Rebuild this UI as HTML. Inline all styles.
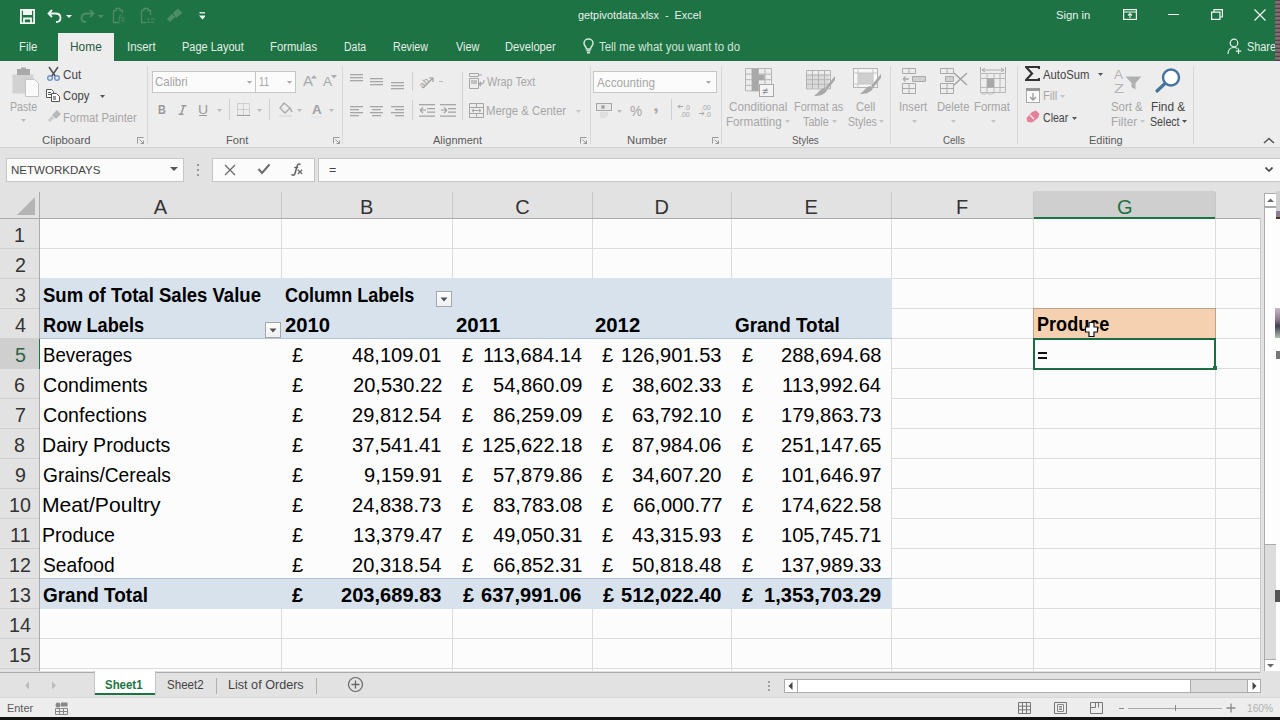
<!DOCTYPE html><html><head><meta charset="utf-8"><style>
html,body{margin:0;padding:0;width:1280px;height:720px;overflow:hidden;background:#fff;font-family:"Liberation Sans",sans-serif}
.t{position:absolute;white-space:pre;line-height:normal;transform-origin:0 0}
</style></head><body>
<div style="position:absolute;left:0px;top:0px;width:1280px;height:61px;background:#1e7344"></div>
<div style="position:absolute;left:58px;top:33px;width:56px;height:28px;background:#ededed"></div>
<div style="position:absolute;left:0px;top:61px;width:1280px;height:86px;background:#ededed"></div>
<div style="position:absolute;left:0px;top:147px;width:1280px;height:1px;background:#d0d0d0"></div>
<div style="position:absolute;left:0px;top:148px;width:1280px;height:44px;background:#e2e2e2"></div>
<div class="t" style="left:577.57px;top:8.59px;font-size:11.5px;font-weight:400;color:#e9f1ec;transform:scaleX(0.9447);">getpivotdata.xlsx  -  Excel</div>
<div class="t" style="left:1055.50px;top:8.59px;font-size:11.5px;font-weight:400;color:#e9f1ec;transform:scaleX(0.9744);">Sign in</div>
<div class="t" style="left:19.08px;top:40.14px;font-size:12px;font-weight:400;color:#e3eee7;transform:scaleX(0.9540);">File</div>
<div class="t" style="left:126.97px;top:40.14px;font-size:12px;font-weight:400;color:#e3eee7;transform:scaleX(0.9529);">Insert</div>
<div class="t" style="left:182.12px;top:40.14px;font-size:12px;font-weight:400;color:#e3eee7;transform:scaleX(0.9155);">Page Layout</div>
<div class="t" style="left:270.10px;top:40.14px;font-size:12px;font-weight:400;color:#e3eee7;transform:scaleX(0.9402);">Formulas</div>
<div class="t" style="left:343.91px;top:40.14px;font-size:12px;font-weight:400;color:#e3eee7;transform:scaleX(0.8723);">Data</div>
<div class="t" style="left:393.15px;top:40.14px;font-size:12px;font-weight:400;color:#e3eee7;transform:scaleX(0.8854);">Review</div>
<div class="t" style="left:455.55px;top:40.14px;font-size:12px;font-weight:400;color:#e3eee7;transform:scaleX(0.9091);">View</div>
<div class="t" style="left:505.11px;top:40.14px;font-size:12px;font-weight:400;color:#e3eee7;transform:scaleX(0.9268);">Developer</div>
<div class="t" style="left:1246.51px;top:40.14px;font-size:12px;font-weight:400;color:#e3eee7;transform:scaleX(0.9061);">Share</div>
<div class="t" style="left:599.27px;top:40.14px;font-size:12px;font-weight:400;color:#d3e6da;transform:scaleX(0.9521);">Tell me what you want to do</div>
<div class="t" style="left:69.80px;top:40.14px;font-size:12px;font-weight:400;color:#285a3f;transform:scaleX(0.9925);">Home</div>
<div style="position:absolute;left:147px;top:66px;width:1px;height:78px;background:#d8d8d8"></div>
<div style="position:absolute;left:342px;top:66px;width:1px;height:78px;background:#d8d8d8"></div>
<div style="position:absolute;left:590px;top:66px;width:1px;height:78px;background:#d8d8d8"></div>
<div style="position:absolute;left:721px;top:66px;width:1px;height:78px;background:#d8d8d8"></div>
<div style="position:absolute;left:890px;top:66px;width:1px;height:78px;background:#d8d8d8"></div>
<div style="position:absolute;left:1017px;top:66px;width:1px;height:78px;background:#d8d8d8"></div>
<div style="position:absolute;left:1193px;top:66px;width:1px;height:78px;background:#d8d8d8"></div>
<svg style="position:absolute;left:137px;top:137px;" width="7" height="7" viewBox="0 0 7 7"><path d="M0.5 6.5V0.5H6.5" fill="none" stroke="#999"/><path d="M2.5 2.5L6.5 6.5M6.5 3.5V6.5H3.5" fill="none" stroke="#999"/></svg>
<svg style="position:absolute;left:333px;top:137px;" width="7" height="7" viewBox="0 0 7 7"><path d="M0.5 6.5V0.5H6.5" fill="none" stroke="#999"/><path d="M2.5 2.5L6.5 6.5M6.5 3.5V6.5H3.5" fill="none" stroke="#999"/></svg>
<svg style="position:absolute;left:580px;top:137px;" width="7" height="7" viewBox="0 0 7 7"><path d="M0.5 6.5V0.5H6.5" fill="none" stroke="#999"/><path d="M2.5 2.5L6.5 6.5M6.5 3.5V6.5H3.5" fill="none" stroke="#999"/></svg>
<svg style="position:absolute;left:712px;top:137px;" width="7" height="7" viewBox="0 0 7 7"><path d="M0.5 6.5V0.5H6.5" fill="none" stroke="#999"/><path d="M2.5 2.5L6.5 6.5M6.5 3.5V6.5H3.5" fill="none" stroke="#999"/></svg>
<svg style="position:absolute;left:11px;top:67px;" width="29" height="31" viewBox="0 0 29 31"><rect x="1.5" y="7.5" width="21" height="19" fill="#d2d2d2"/><rect x="6" y="2" width="13" height="6" fill="#a9a9a9"/><rect x="10" y="0.5" width="5" height="3" fill="#a9a9a9"/><path d="M14.5 12.5H23.5L27.5 16.5V29.5H14.5Z" fill="#fafafa" stroke="#c4c4c4"/></svg>
<svg style="position:absolute;left:21px;top:119px;" width="5" height="3" viewBox="0 0 5 3"><path d="M0 0H5L2.5 3Z" fill="#bbb"/></svg>
<div class="t" style="left:10.15px;top:99.74px;font-size:12px;font-weight:400;color:#a6a6a6;transform:scaleX(0.8882);">Paste</div>
<svg style="position:absolute;left:46px;top:66px;" width="15" height="15" viewBox="0 0 15 15"><path d="M3 1L9.5 10.5M12 1L5.5 10.5" stroke="#555" stroke-width="1.6" fill="none"/><circle cx="4" cy="12" r="2.3" fill="none" stroke="#6f95c8" stroke-width="1.4"/><circle cx="11" cy="12" r="2.3" fill="none" stroke="#6f95c8" stroke-width="1.4"/></svg>
<div class="t" style="left:63.42px;top:68.14px;font-size:12px;font-weight:400;color:#444444;transform:scaleX(0.9722);">Cut</div>
<svg style="position:absolute;left:45px;top:88px;" width="16" height="15" viewBox="0 0 16 15"><path d="M1.5 1.5H6.5L8.5 3.5V9.5H1.5Z" fill="#fff" stroke="#555"/><path d="M3 4.5H6M3 6.5H6" stroke="#555"/><path d="M6.5 5.5H11.5L14.5 8.5V13.5H6.5Z" fill="#fff" stroke="#555"/><rect x="8" y="8" width="3" height="4" fill="#999"/></svg>
<div class="t" style="left:63.44px;top:88.89px;font-size:12px;font-weight:400;color:#444444;transform:scaleX(0.9391);">Copy</div>
<svg style="position:absolute;left:100px;top:95px;" width="5" height="3" viewBox="0 0 5 3"><path d="M0 0H5L2.5 3Z" fill="#555"/></svg>
<svg style="position:absolute;left:47px;top:109px;" width="15" height="13" viewBox="0 0 15 13"><path d="M1 11L5 7L7 9L3 13Z" fill="#c8c8c8"/><path d="M5 6L10 1L14 5L9 10Z" fill="#b8b8b8"/></svg>
<div class="t" style="left:63.36px;top:111.04px;font-size:12px;font-weight:400;color:#a6a6a6;transform:scaleX(0.9293);">Format Painter</div>
<div class="t" style="left:41.93px;top:133.90px;font-size:10.5px;font-weight:400;color:#5a5a5a;transform:scaleX(1.0804);">Clipboard</div>
<div style="position:absolute;left:152px;top:71px;width:104px;height:22px;background:#fbfbfb;border:1px solid #c6c6c6;box-sizing:border-box"></div>
<div style="position:absolute;left:255px;top:71px;width:41px;height:22px;background:#fbfbfb;border:1px solid #c6c6c6;box-sizing:border-box"></div>
<div class="t" style="left:154.72px;top:74.94px;font-size:12px;font-weight:400;color:#a6a6a6;transform:scaleX(0.9607);">Calibri</div>
<div class="t" style="left:259.27px;top:74.94px;font-size:12px;font-weight:400;color:#a6a6a6;transform:scaleX(0.8106);">11</div>
<svg style="position:absolute;left:247px;top:81px;" width="5" height="3" viewBox="0 0 5 3"><path d="M0 0H5L2.5 3Z" fill="#aaa"/></svg>
<svg style="position:absolute;left:287px;top:81px;" width="5" height="3" viewBox="0 0 5 3"><path d="M0 0H5L2.5 3Z" fill="#aaa"/></svg>
<div class="t" style="left:303.00px;top:73.33px;font-size:14px;font-weight:400;color:#a8a8a8;transform:scaleX(1.0741);">A</div>
<svg style="position:absolute;left:311px;top:75px;" width="6" height="4" viewBox="0 0 6 4"><path d="M0 3.5H6L3 0Z" fill="#aaa"/></svg>
<div class="t" style="left:323.00px;top:75.14px;font-size:12px;font-weight:400;color:#a8a8a8;transform:scaleX(1.1278);">A</div>
<svg style="position:absolute;left:331px;top:75px;" width="6" height="4" viewBox="0 0 6 4"><path d="M0 0H6L3 3.5Z" fill="#aaa"/></svg>
<div class="t" style="left:157.50px;top:103.14px;font-size:12px;font-weight:700;color:#9a9a9a;transform:scaleX(0.9016);">B</div>
<svg style="position:absolute;left:178px;top:105px;" width="9" height="10" viewBox="0 0 9 10"><path d="M3.5 0.8H8.5M0.5 9.2H5.5M6 0.8L3 9.2" fill="none" stroke="#9a9a9a" stroke-width="1.5"/></svg>
<div class="t" style="left:197.95px;top:102.64px;font-size:12px;font-weight:400;color:#9a9a9a;transform:scaleX(1.1696);">U</div>
<div style="position:absolute;left:199px;top:115px;width:8px;height:1px;background:#9a9a9a"></div>
<svg style="position:absolute;left:217px;top:109px;" width="5" height="3" viewBox="0 0 5 3"><path d="M0 0H5L2.5 3Z" fill="#bbb"/></svg>
<div style="position:absolute;left:229px;top:99px;width:1px;height:21px;background:#d0d0d0"></div>
<svg style="position:absolute;left:237px;top:103px;" width="13" height="13" viewBox="0 0 13 13"><path d="M0.5 0.5H12.5V12.5H0.5ZM6.5 0.5V12.5M0.5 6.5H12.5" fill="none" stroke="#b0b0b0" stroke-dasharray="1 1"/><path d="M0 12.5H13" stroke="#a0a0a0" stroke-width="1.2"/></svg>
<svg style="position:absolute;left:257px;top:109px;" width="5" height="3" viewBox="0 0 5 3"><path d="M0 0H5L2.5 3Z" fill="#bbb"/></svg>
<div style="position:absolute;left:269px;top:99px;width:1px;height:21px;background:#d0d0d0"></div>
<svg style="position:absolute;left:278px;top:102px;" width="15" height="15" viewBox="0 0 15 15"><path d="M6 1L12 6L7 11L2 6Z" fill="none" stroke="#a8a8a8" stroke-width="1.3"/><path d="M12 6L14 10" stroke="#a8a8a8" stroke-width="1.5"/><rect x="1" y="13" width="13" height="2" fill="#e0e0e0"/></svg>
<svg style="position:absolute;left:297px;top:109px;" width="5" height="3" viewBox="0 0 5 3"><path d="M0 0H5L2.5 3Z" fill="#bbb"/></svg>
<div class="t" style="left:311.66px;top:102.23px;font-size:13px;font-weight:700;color:#a0a0a0;transform:scaleX(1.0333);">A</div>
<div style="position:absolute;left:311px;top:116px;width:11px;height:2px;background:#e6e6e6"></div>
<svg style="position:absolute;left:329px;top:109px;" width="5" height="3" viewBox="0 0 5 3"><path d="M0 0H5L2.5 3Z" fill="#bbb"/></svg>
<div class="t" style="left:225.81px;top:133.90px;font-size:10.5px;font-weight:400;color:#5a5a5a;transform:scaleX(1.0593);">Font</div>
<svg style="position:absolute;left:350px;top:74px;" width="14" height="9" viewBox="0 0 14 9"><rect x="0" y="0" width="13" height="1.3" fill="#a6a6a6"/><rect x="0" y="3" width="13" height="1.3" fill="#a6a6a6"/><rect x="0" y="6" width="13" height="1.3" fill="#a6a6a6"/></svg>
<svg style="position:absolute;left:370px;top:78px;" width="14" height="9" viewBox="0 0 14 9"><rect x="0" y="0" width="13" height="1.3" fill="#a6a6a6"/><rect x="0" y="3" width="13" height="1.3" fill="#a6a6a6"/><rect x="0" y="6" width="13" height="1.3" fill="#a6a6a6"/></svg>
<svg style="position:absolute;left:391px;top:82px;" width="14" height="9" viewBox="0 0 14 9"><rect x="0" y="0" width="13" height="1.3" fill="#a6a6a6"/><rect x="0" y="3" width="13" height="1.3" fill="#a6a6a6"/><rect x="0" y="6" width="13" height="1.3" fill="#a6a6a6"/></svg>
<svg style="position:absolute;left:350px;top:106px;" width="14" height="12" viewBox="0 0 14 12"><rect x="0" y="0" width="13" height="1.3" fill="#a6a6a6"/><rect x="0" y="3" width="9" height="1.3" fill="#a6a6a6"/><rect x="0" y="6" width="13" height="1.3" fill="#a6a6a6"/><rect x="0" y="9" width="9" height="1.3" fill="#a6a6a6"/></svg>
<svg style="position:absolute;left:370px;top:106px;" width="14" height="12" viewBox="0 0 14 12"><rect x="0" y="0" width="13" height="1.3" fill="#a6a6a6"/><rect x="2" y="3" width="9" height="1.3" fill="#a6a6a6"/><rect x="0" y="6" width="13" height="1.3" fill="#a6a6a6"/><rect x="2" y="9" width="9" height="1.3" fill="#a6a6a6"/></svg>
<svg style="position:absolute;left:391px;top:106px;" width="14" height="12" viewBox="0 0 14 12"><rect x="0" y="0" width="13" height="1.3" fill="#a6a6a6"/><rect x="4" y="3" width="9" height="1.3" fill="#a6a6a6"/><rect x="0" y="6" width="13" height="1.3" fill="#a6a6a6"/><rect x="4" y="9" width="9" height="1.3" fill="#a6a6a6"/></svg>
<div style="position:absolute;left:412px;top:72px;width:1px;height:19px;background:#d0d0d0"></div>
<div style="position:absolute;left:412px;top:100px;width:1px;height:20px;background:#d0d0d0"></div>
<svg style="position:absolute;left:419px;top:74px;" width="16" height="15" viewBox="0 0 16 15"><text x="0" y="12" font-size="9" fill="#a0a0a0" transform="rotate(-45 5 9)" font-family="Liberation Sans">ab</text><path d="M4 14L14 4M10 4H14V8" fill="none" stroke="#a0a0a0" stroke-width="1.2"/></svg>
<div style="position:absolute;left:439px;top:81px;width:4px;height:1px;background:#bbb"></div>
<svg style="position:absolute;left:419px;top:104px;" width="16" height="13" viewBox="0 0 16 13"><rect x="0" y="0" width="16" height="1.3" fill="#a6a6a6"/><rect x="0" y="11.5" width="16" height="1.3" fill="#a6a6a6"/><rect x="8" y="4" width="8" height="1.3" fill="#a6a6a6"/><rect x="8" y="7.5" width="8" height="1.3" fill="#a6a6a6"/><path d="M1 6.2L4 3.5M1 6.2L4 9M1 6.2H7" stroke="#a6a6a6" stroke-width="1.3" fill="none"/></svg>
<svg style="position:absolute;left:440px;top:104px;" width="16" height="13" viewBox="0 0 16 13"><rect x="0" y="0" width="16" height="1.3" fill="#a6a6a6"/><rect x="0" y="11.5" width="16" height="1.3" fill="#a6a6a6"/><rect x="8" y="4" width="8" height="1.3" fill="#a6a6a6"/><rect x="8" y="7.5" width="8" height="1.3" fill="#a6a6a6"/><path d="M7 6.2L4 3.5M7 6.2L4 9M7 6.2H1" stroke="#a6a6a6" stroke-width="1.3" fill="none"/></svg>
<div style="position:absolute;left:462px;top:72px;width:1px;height:48px;background:#d0d0d0"></div>
<svg style="position:absolute;left:469px;top:73px;" width="16" height="16" viewBox="0 0 16 16"><path d="M0.5 0.5H9.5V3.5H0.5ZM0.5 5.5H9.5V15.5H0.5Z" fill="none" stroke="#a6a6a6"/><path d="M9.5 2H13" stroke="#a6a6a6"/><rect x="2" y="7" width="6" height="4" fill="#c0c0c0"/><path d="M15 7C15 11 13 11 10 11M12 9L10 11L12 13" fill="none" stroke="#a6a6a6" stroke-width="1.2"/></svg>
<div class="t" style="left:486.95px;top:75.14px;font-size:12px;font-weight:400;color:#a6a6a6;transform:scaleX(0.8989);">Wrap Text</div>
<svg style="position:absolute;left:469px;top:103px;" width="15" height="15" viewBox="0 0 15 15"><path d="M0.5 0.5H14.5V14.5H0.5ZM0.5 4.5H14.5M0.5 10.5H14.5M7.5 0.5V4.5M7.5 10.5V14.5" fill="none" stroke="#a6a6a6"/><path d="M3 7.5H12M3 7.5L5 5.8M3 7.5L5 9.2M12 7.5L10 5.8M12 7.5L10 9.2" fill="none" stroke="#a6a6a6"/></svg>
<div class="t" style="left:486.09px;top:104.14px;font-size:12px;font-weight:400;color:#a6a6a6;transform:scaleX(0.9459);">Merge &amp; Center</div>
<svg style="position:absolute;left:576px;top:110px;" width="5" height="3" viewBox="0 0 5 3"><path d="M0 0H5L2.5 3Z" fill="#c4c4c4"/></svg>
<div class="t" style="left:433.00px;top:133.90px;font-size:10.5px;font-weight:400;color:#5a5a5a;transform:scaleX(1.0511);">Alignment</div>
<div style="position:absolute;left:593px;top:71px;width:124px;height:22px;background:#fbfbfb;border:1px solid #c6c6c6;box-sizing:border-box"></div>
<div class="t" style="left:596.80px;top:75.54px;font-size:12px;font-weight:400;color:#a6a6a6;transform:scaleX(0.9768);">Accounting</div>
<svg style="position:absolute;left:706px;top:81px;" width="5" height="3" viewBox="0 0 5 3"><path d="M0 0H5L2.5 3Z" fill="#aaa"/></svg>
<svg style="position:absolute;left:596px;top:103px;" width="16" height="15" viewBox="0 0 16 15"><rect x="0.5" y="0.5" width="15" height="7" fill="#e8e8e8" stroke="#a6a6a6"/><circle cx="7" cy="4" r="2" fill="#a6a6a6"/><path d="M4 10H12M4 12H12M4 14H10" stroke="#d0d0d0"/></svg>
<svg style="position:absolute;left:617px;top:110px;" width="5" height="3" viewBox="0 0 5 3"><path d="M0 0H5L2.5 3Z" fill="#bbb"/></svg>
<div class="t" style="left:630.12px;top:103.13px;font-size:14px;font-weight:400;color:#a6a6a6;transform:scaleX(0.9756);">%</div>
<div class="t" style="left:652.50px;top:96.52px;font-size:16px;font-weight:700;color:#a6a6a6;transform:scaleX(1.3393);">,</div>
<div style="position:absolute;left:671px;top:99px;width:1px;height:21px;background:#d0d0d0"></div>
<svg style="position:absolute;left:677px;top:103px;" width="15" height="14" viewBox="0 0 15 14"><path d="M1 3.5H6M1 3.5L3 1.5M1 3.5L3 5.5" fill="none" stroke="#a6a6a6"/><text x="7" y="6.5" font-size="7" fill="#a6a6a6" font-family="Liberation Sans">.0</text><text x="3" y="13.5" font-size="7" fill="#a6a6a6" font-family="Liberation Sans">.00</text></svg>
<svg style="position:absolute;left:698px;top:103px;" width="15" height="14" viewBox="0 0 15 14"><text x="3" y="6.5" font-size="7" fill="#a6a6a6" font-family="Liberation Sans">.00</text><path d="M1 10.5H6M6 10.5L4 8.5M6 10.5L4 12.5" fill="none" stroke="#a6a6a6"/><text x="7" y="13.5" font-size="7" fill="#a6a6a6" font-family="Liberation Sans">.0</text></svg>
<div class="t" style="left:627.10px;top:133.90px;font-size:10.5px;font-weight:400;color:#5a5a5a;transform:scaleX(1.0735);">Number</div>
<svg style="position:absolute;left:745px;top:68px;" width="30" height="30" viewBox="0 0 30 30"><g fill="none" stroke="#b4b4b4"><path d="M0.5 0.5H26.5M0.5 0.5V23"/><path d="M0.5 6.1H26.5M7.0 0.5V23"/><path d="M0.5 11.7H26.5M13.5 0.5V23"/><path d="M0.5 17.3H26.5M20.0 0.5V23"/><path d="M0.5 22.9H26.5M26.5 0.5V23"/></g><rect x="7" y="1" width="6" height="22" fill="#a8a8a8"/><rect x="13" y="6.6" width="6.5" height="5.6" fill="#a8a8a8"/><rect x="14.5" y="16.5" width="14" height="12" fill="#f4f4f4" stroke="#a8a8a8"/><text x="17" y="26.5" font-size="11" fill="#888" font-family="Liberation Sans">≠</text></svg>
<svg style="position:absolute;left:806px;top:70px;" width="30" height="27" viewBox="0 0 30 27"><rect x="1" y="4" width="22" height="14" fill="#dadada"/><g fill="none" stroke="#b4b4b4"><path d="M0.5 0.5H24.5M0.5 0.5V19"/><path d="M0.5 5.1H24.5M6.5 0.5V19"/><path d="M0.5 9.7H24.5M12.5 0.5V19"/><path d="M0.5 14.3H24.5M18.5 0.5V19"/><path d="M0.5 18.9H24.5M24.5 0.5V19"/></g><path d="M29 6L19 18L21 20L29 10Z" fill="#a8a8a8"/><path d="M18 18C14 19 12 23 8 26C13 26 19 25 21 20Z" fill="#a8a8a8"/></svg>
<div class="t" style="left:729.42px;top:99.94px;font-size:12px;font-weight:400;color:#a6a6a6;transform:scaleX(0.9724);">Conditional</div>
<div class="t" style="left:726.07px;top:114.54px;font-size:12px;font-weight:400;color:#a6a6a6;transform:scaleX(0.9709);">Formatting</div>
<svg style="position:absolute;left:785px;top:120px;" width="5" height="3" viewBox="0 0 5 3"><path d="M0 0H5L2.5 3Z" fill="#c4c4c4"/></svg>
<div class="t" style="left:794.12px;top:99.94px;font-size:12px;font-weight:400;color:#a6a6a6;transform:scaleX(0.9122);">Format as</div>
<div class="t" style="left:802.78px;top:114.54px;font-size:12px;font-weight:400;color:#a6a6a6;transform:scaleX(0.8961);">Table</div>
<svg style="position:absolute;left:832px;top:120px;" width="5" height="3" viewBox="0 0 5 3"><path d="M0 0H5L2.5 3Z" fill="#c4c4c4"/></svg>
<svg style="position:absolute;left:853px;top:68px;" width="30" height="28" viewBox="0 0 30 28"><rect x="0.5" y="0.5" width="24" height="19" fill="#f6f6f6" stroke="#b4b4b4"/><rect x="5" y="5" width="15" height="11" fill="#cfcfcf"/><path d="M5 0.5V19.5M20 0.5V19.5M0.5 5H24.5M0.5 16H24.5" stroke="#c4c4c4" fill="none"/><path d="M28 6L18 18L20 20L28 10Z" fill="#a8a8a8"/><path d="M17 18C13 19 11 23 7 26C12 26 18 25 20 20Z" fill="#a8a8a8"/></svg>
<div class="t" style="left:856.44px;top:99.94px;font-size:12px;font-weight:400;color:#a6a6a6;transform:scaleX(0.9346);">Cell</div>
<div class="t" style="left:847.52px;top:114.54px;font-size:12px;font-weight:400;color:#a6a6a6;transform:scaleX(0.8822);">Styles</div>
<svg style="position:absolute;left:879px;top:120px;" width="5" height="3" viewBox="0 0 5 3"><path d="M0 0H5L2.5 3Z" fill="#c4c4c4"/></svg>
<div class="t" style="left:791.56px;top:133.90px;font-size:10.5px;font-weight:400;color:#5a5a5a;transform:scaleX(0.9362);">Styles</div>
<svg style="position:absolute;left:902px;top:68px;" width="25" height="27" viewBox="0 0 25 27"><g fill="none" stroke="#aaa"><path d="M0.5 0.5H13.5V5.5H0.5ZM7 0.5V5.5"/><path d="M10.5 8.5H23.5V13.5H10.5ZM17 8.5V13.5"/><path d="M0.5 15.5H13.5V25.5H0.5ZM7 15.5V25.5M0.5 20.5H13.5"/></g><rect x="11" y="9" width="12" height="4" fill="#d0d0d0"/><path d="M1 11H7M1 11L3.5 8.5M1 11L3.5 13.5" stroke="#aaa" stroke-width="1.3" fill="none"/></svg>
<svg style="position:absolute;left:940px;top:68px;" width="28" height="27" viewBox="0 0 28 27"><g fill="none" stroke="#aaa"><path d="M0.5 0.5H13.5V5.5H0.5ZM7 0.5V5.5"/><path d="M5.5 8.5H13.5V13.5H5.5Z"/><path d="M0.5 15.5H13.5V25.5H0.5ZM7 15.5V25.5M0.5 20.5H13.5"/></g><rect x="6" y="9" width="7" height="4" fill="#d0d0d0"/><path d="M14 5L27 17M27 5L14 17" stroke="#a0a0a0" stroke-width="1.4"/></svg>
<svg style="position:absolute;left:980px;top:67px;" width="27" height="30" viewBox="0 0 27 30"><path d="M0.5 0V6M25.5 0V6M2 3H24M2 3L5 1M2 3L5 5M24 3L21 1M24 3L21 5" fill="none" stroke="#aaa"/><g fill="none" stroke="#b8b8b8"><path d="M0.5 6.5H25.5V25.5H0.5ZM7 6.5V25.5M14 6.5V25.5M20 6.5V25.5M0.5 11.5H25.5M0.5 20.5H25.5"/></g><rect x="7" y="11.5" width="7" height="9" fill="#a8a8a8"/><path d="M1 26Q4 29 7 26Q10 29 14 26" fill="none" stroke="#c0c0c0"/></svg>
<div class="t" style="left:898.99px;top:99.94px;font-size:12px;font-weight:400;color:#a6a6a6;transform:scaleX(0.9356);">Insert</div>
<div class="t" style="left:937.10px;top:99.94px;font-size:12px;font-weight:400;color:#a6a6a6;transform:scaleX(0.9343);">Delete</div>
<div class="t" style="left:974.09px;top:99.94px;font-size:12px;font-weight:400;color:#a6a6a6;transform:scaleX(0.9470);">Format</div>
<svg style="position:absolute;left:912px;top:120px;" width="5" height="3" viewBox="0 0 5 3"><path d="M0 0H5L2.5 3Z" fill="#c4c4c4"/></svg>
<svg style="position:absolute;left:951px;top:120px;" width="5" height="3" viewBox="0 0 5 3"><path d="M0 0H5L2.5 3Z" fill="#c4c4c4"/></svg>
<svg style="position:absolute;left:991px;top:120px;" width="5" height="3" viewBox="0 0 5 3"><path d="M0 0H5L2.5 3Z" fill="#c4c4c4"/></svg>
<div class="t" style="left:942.51px;top:133.90px;font-size:10.5px;font-weight:400;color:#5a5a5a;transform:scaleX(0.9346);">Cells</div>
<svg style="position:absolute;left:1025px;top:66px;" width="15" height="15" viewBox="0 0 15 15"><path d="M14 3V1H1L7 7.5L1 14H14V12" fill="none" stroke="#333" stroke-width="2.2" stroke-linejoin="miter"/></svg>
<div class="t" style="left:1043.30px;top:67.84px;font-size:12px;font-weight:400;color:#444444;transform:scaleX(0.9403);">AutoSum</div>
<svg style="position:absolute;left:1098px;top:73px;" width="5" height="3" viewBox="0 0 5 3"><path d="M0 0H5L2.5 3Z" fill="#555"/></svg>
<svg style="position:absolute;left:1026px;top:88px;" width="14" height="15" viewBox="0 0 14 15"><rect x="0.5" y="0.5" width="13" height="14" fill="#fafafa" stroke="#aaa"/><rect x="0" y="0" width="14" height="3" fill="#999"/><path d="M7 5V12M4 9L7 12L10 9" fill="none" stroke="#999" stroke-width="1.3"/></svg>
<div class="t" style="left:1042.62px;top:88.64px;font-size:12px;font-weight:400;color:#a6a6a6;transform:scaleX(0.9218);">Fill</div>
<svg style="position:absolute;left:1060px;top:95px;" width="5" height="3" viewBox="0 0 5 3"><path d="M0 0H5L2.5 3Z" fill="#c4c4c4"/></svg>
<svg style="position:absolute;left:1026px;top:110px;" width="14" height="13" viewBox="0 0 14 13"><path d="M6 2L10 0.5L13.5 4L12 8L6 12.5L1.5 12L0.5 8Z" fill="#e3809a"/><path d="M4 5L8 9" stroke="#f0f0f0" stroke-width="1.2"/></svg>
<div class="t" style="left:1042.97px;top:110.74px;font-size:12px;font-weight:400;color:#444444;transform:scaleX(0.8800);">Clear</div>
<svg style="position:absolute;left:1072px;top:117px;" width="5" height="3" viewBox="0 0 5 3"><path d="M0 0H5L2.5 3Z" fill="#555"/></svg>
<div class="t" style="left:1114.00px;top:68.14px;font-size:12px;font-weight:400;color:#b4b4b4;transform:scaleX(1.1278);">A</div>
<div class="t" style="left:1113.51px;top:82.14px;font-size:12px;font-weight:400;color:#b4b4b4;transform:scaleX(1.3636);">Z</div>
<svg style="position:absolute;left:1125px;top:76px;" width="17" height="14" viewBox="0 0 17 14"><path d="M0.5 0.5H16.5L10.5 7V13.5L6.5 11V7Z" fill="#b0b0b0"/></svg>
<div class="t" style="left:1111.49px;top:99.94px;font-size:12px;font-weight:400;color:#a6a6a6;transform:scaleX(0.9515);">Sort &amp;</div>
<div class="t" style="left:1111.06px;top:114.54px;font-size:12px;font-weight:400;color:#a6a6a6;transform:scaleX(0.9804);">Filter</div>
<svg style="position:absolute;left:1140px;top:120px;" width="5" height="3" viewBox="0 0 5 3"><path d="M0 0H5L2.5 3Z" fill="#c4c4c4"/></svg>
<svg style="position:absolute;left:1154px;top:67px;" width="30" height="28" viewBox="0 0 30 28"><circle cx="17" cy="10.5" r="8" fill="#fff" stroke="#44739e" stroke-width="2.4"/><path d="M11 16.5L3 24" stroke="#44739e" stroke-width="3.2" stroke-linecap="round"/></svg>
<div class="t" style="left:1151.06px;top:99.94px;font-size:12px;font-weight:400;color:#444444;transform:scaleX(0.9839);">Find &amp;</div>
<div class="t" style="left:1149.52px;top:114.54px;font-size:12px;font-weight:400;color:#444444;transform:scaleX(0.8869);">Select</div>
<svg style="position:absolute;left:1182px;top:120px;" width="5" height="3" viewBox="0 0 5 3"><path d="M0 0H5L2.5 3Z" fill="#555"/></svg>
<div class="t" style="left:1089.12px;top:133.90px;font-size:10.5px;font-weight:400;color:#5a5a5a;transform:scaleX(1.0473);">Editing</div>
<svg style="position:absolute;left:20px;top:9px;" width="15" height="15" viewBox="0 0 15 15"><path d="M0.9 0.9H14.1V14.1H0.9Z" fill="none" stroke="#f2f7f4" stroke-width="1.8"/><rect x="3" y="1" width="9" height="5" fill="#f2f7f4"/><path d="M4 14V9.5H11V14" fill="none" stroke="#f2f7f4" stroke-width="1.8"/></svg>
<svg style="position:absolute;left:47px;top:9px;" width="15" height="14" viewBox="0 0 15 14"><path d="M5 1L1.5 4.5L5 8" fill="none" stroke="#f2f7f4" stroke-width="1.8"/><path d="M2 4.5H8.5C12 4.5 13.5 6.5 13.5 9C13.5 11.5 12 13 9 13" fill="none" stroke="#f2f7f4" stroke-width="1.8"/></svg>
<svg style="position:absolute;left:66px;top:15px;" width="6" height="3" viewBox="0 0 6 3"><path d="M0 0H6L3 3Z" fill="#f2f7f4"/></svg>
<svg style="position:absolute;left:80px;top:9px;" width="15" height="14" viewBox="0 0 15 14"><path d="M10 1L13.5 4.5L10 8" fill="none" stroke="#4f8d68" stroke-width="1.8"/><path d="M13 4.5H6.5C3 4.5 1.5 6.5 1.5 9C1.5 11.5 3 13 6 13" fill="none" stroke="#4f8d68" stroke-width="1.8"/></svg>
<svg style="position:absolute;left:98px;top:15px;" width="6" height="3" viewBox="0 0 6 3"><path d="M0 0H6L3 3Z" fill="#4f8d68"/></svg>
<svg style="position:absolute;left:112px;top:7px;" width="16" height="17" viewBox="0 0 16 17"><path d="M1.5 3.5H4V1.5H8V3.5H10.5V6M1.5 3.5V15.5H6" fill="none" stroke="#4f8d68" stroke-width="1.3"/><text x="6" y="15" font-size="10" font-style="italic" fill="#4f8d68" font-family="Liberation Serif">fx</text></svg>
<svg style="position:absolute;left:140px;top:7px;" width="16" height="17" viewBox="0 0 16 17"><path d="M1.5 3.5H4V1.5H8V3.5H10.5V6M1.5 3.5V15.5H6M10.5 8V4" fill="none" stroke="#4f8d68" stroke-width="1.3"/><text x="6" y="16" font-size="8" fill="#4f8d68" font-family="Liberation Sans">12</text></svg>
<svg style="position:absolute;left:166px;top:8px;" width="17" height="15" viewBox="0 0 17 15"><path d="M1 11L6 6L9 9L4 14Z" fill="#4f8d68"/><path d="M7 5L12 0.5L16.5 5L10 10Z" fill="#4f8d68"/></svg>
<svg style="position:absolute;left:199px;top:12px;" width="6" height="8" viewBox="0 0 6 8"><path d="M0.5 0.8H6.5" stroke="#f2f7f4" stroke-width="1.3"/><path d="M0 3.5H7L3.5 7.5Z" fill="#f2f7f4"/></svg>
<svg style="position:absolute;left:1123px;top:9px;" width="14" height="11" viewBox="0 0 14 11"><rect x="0.6" y="0.6" width="12.8" height="9.8" fill="none" stroke="#f2f7f4" stroke-width="1.2"/><path d="M0.6 3H13.4M7 9V4.5M5 6.5L7 4.5L9 6.5" fill="none" stroke="#f2f7f4" stroke-width="1.1"/></svg>
<div style="position:absolute;left:1168px;top:14px;width:11px;height:1px;background:#f2f7f4"></div>
<svg style="position:absolute;left:1211px;top:9px;" width="12" height="11" viewBox="0 0 12 11"><path d="M0.6 3.1H8.9V10.4H0.6Z M3 3V0.6H11.4V8H9" fill="none" stroke="#f2f7f4" stroke-width="1.2"/></svg>
<svg style="position:absolute;left:1254px;top:9px;" width="12" height="12" viewBox="0 0 12 12"><path d="M0.5 0.5L11.5 11.5M11.5 0.5L0.5 11.5" stroke="#f2f7f4" stroke-width="1.2"/></svg>
<svg style="position:absolute;left:583px;top:38px;" width="11" height="16" viewBox="0 0 11 16"><path d="M5.5 1C3 1 1 2.9 1 5.2C1 7.6 3.2 8.6 3.5 11H7.5C7.8 8.6 10 7.6 10 5.2C10 2.9 8 1 5.5 1Z" fill="none" stroke="#d5e7db" stroke-width="1.5"/><path d="M3.5 12.8H7.5M4 14.8H7" stroke="#d5e7db" stroke-width="1.4"/></svg>
<svg style="position:absolute;left:1227px;top:38px;" width="15" height="17" viewBox="0 0 15 17"><circle cx="7" cy="5" r="3.8" fill="none" stroke="#e3eee7" stroke-width="1.2"/><path d="M1 16C1 12 3.5 9.5 7 9.5C8.5 9.5 9.5 10 10.5 10.5" fill="none" stroke="#e3eee7" stroke-width="1.2"/><path d="M11.5 10.5V16M8.8 13.2H14.2" stroke="#e3eee7" stroke-width="1.2"/></svg>
<svg style="position:absolute;left:1263px;top:137px;" width="12" height="7" viewBox="0 0 12 7"><path d="M1 6L6 1.5L11 6" fill="none" stroke="#555" stroke-width="1.5"/></svg>
<div style="position:absolute;left:6px;top:158px;width:178px;height:24px;background:#fbfbfb;border:1px solid #c6c6c6;box-sizing:border-box"></div>
<div class="t" style="left:11.08px;top:163.59px;font-size:11.5px;font-weight:400;color:#444;transform:scaleX(1.0022);">NETWORKDAYS</div>
<div style="position:absolute;left:212px;top:158px;width:103px;height:24px;background:#fbfbfb;border:1px solid #c6c6c6;box-sizing:border-box"></div>
<div style="position:absolute;left:318px;top:158px;width:962px;height:24px;background:#fbfbfb;border:1px solid #c6c6c6;border-right:none;box-sizing:border-box"></div>
<div class="t" style="left:329.38px;top:163.59px;font-size:11.5px;font-weight:400;color:#444;transform:scaleX(1.0758);">=</div>
<svg style="position:absolute;left:170px;top:167px;" width="8" height="4" viewBox="0 0 8 4"><path d="M0 0H8L4 4Z" fill="#555"/></svg>
<div style="position:absolute;left:197px;top:164px;width:2px;height:2px;background:#999"></div>
<div style="position:absolute;left:197px;top:169px;width:2px;height:2px;background:#999"></div>
<div style="position:absolute;left:197px;top:174px;width:2px;height:2px;background:#999"></div>
<svg style="position:absolute;left:224px;top:164px;" width="12" height="12" viewBox="0 0 12 12"><path d="M1 1L11 11M11 1L1 11" stroke="#6a6a6a" stroke-width="1.3"/></svg>
<svg style="position:absolute;left:257px;top:163px;" width="14" height="12" viewBox="0 0 14 12"><path d="M1.5 6L5 10L12.5 1.5" fill="none" stroke="#6a6a6a" stroke-width="1.9"/></svg>
<svg style="position:absolute;left:290px;top:162px;" width="15" height="15" viewBox="0 0 15 15"><path d="M10 2.2C8.5 1.6 7.5 2.5 7 4.5L5 11.5C4.5 13.2 3.5 13.5 2 12.8" fill="none" stroke="#606060" stroke-width="1.5" stroke-linecap="round"/><path d="M4.2 5.5H8.2" stroke="#606060" stroke-width="1.3"/><path d="M7.8 7.8L12.2 12M12.2 7.8L7.8 12" stroke="#707070" stroke-width="1.4"/></svg>
<svg style="position:absolute;left:1265px;top:167px;" width="8" height="5" viewBox="0 0 8 5"><path d="M0.5 0.5L4 4L7.5 0.5" fill="none" stroke="#444" stroke-width="1.6"/></svg>
<div style="position:absolute;left:0px;top:192px;width:1264px;height:26px;background:#e2e2e2"></div>
<div style="position:absolute;left:1034px;top:191px;width:181px;height:27px;background:#cfcfcf"></div>
<div style="position:absolute;left:0px;top:218px;width:1260px;height:1px;background:#ababab"></div>
<div style="position:absolute;left:1034px;top:217px;width:181px;height:2px;background:#1e7344"></div>
<div style="position:absolute;left:0px;top:219px;width:39px;height:452px;background:#e2e2e2"></div>
<div style="position:absolute;left:0px;top:339px;width:39px;height:30px;background:#cfcfcf"></div>
<div style="position:absolute;left:39px;top:192px;width:1px;height:479px;background:#ababab"></div>
<div style="position:absolute;left:39px;top:339px;width:1px;height:30px;background:#1e7344"></div>
<div style="position:absolute;left:40px;top:219px;width:1220px;height:452px;background:#fcfcfc"></div>
<div style="position:absolute;left:40px;top:248px;width:1220px;height:1px;background:#dcdcdc"></div>
<div style="position:absolute;left:0px;top:248px;width:39px;height:1px;background:#d0d0d0"></div>
<div style="position:absolute;left:40px;top:278px;width:1220px;height:1px;background:#dcdcdc"></div>
<div style="position:absolute;left:0px;top:278px;width:39px;height:1px;background:#d0d0d0"></div>
<div style="position:absolute;left:40px;top:308px;width:1220px;height:1px;background:#dcdcdc"></div>
<div style="position:absolute;left:0px;top:308px;width:39px;height:1px;background:#d0d0d0"></div>
<div style="position:absolute;left:40px;top:338px;width:1220px;height:1px;background:#dcdcdc"></div>
<div style="position:absolute;left:0px;top:338px;width:39px;height:1px;background:#d0d0d0"></div>
<div style="position:absolute;left:40px;top:368px;width:1220px;height:1px;background:#dcdcdc"></div>
<div style="position:absolute;left:0px;top:368px;width:39px;height:1px;background:#d0d0d0"></div>
<div style="position:absolute;left:40px;top:398px;width:1220px;height:1px;background:#dcdcdc"></div>
<div style="position:absolute;left:0px;top:398px;width:39px;height:1px;background:#d0d0d0"></div>
<div style="position:absolute;left:40px;top:428px;width:1220px;height:1px;background:#dcdcdc"></div>
<div style="position:absolute;left:0px;top:428px;width:39px;height:1px;background:#d0d0d0"></div>
<div style="position:absolute;left:40px;top:458px;width:1220px;height:1px;background:#dcdcdc"></div>
<div style="position:absolute;left:0px;top:458px;width:39px;height:1px;background:#d0d0d0"></div>
<div style="position:absolute;left:40px;top:488px;width:1220px;height:1px;background:#dcdcdc"></div>
<div style="position:absolute;left:0px;top:488px;width:39px;height:1px;background:#d0d0d0"></div>
<div style="position:absolute;left:40px;top:518px;width:1220px;height:1px;background:#dcdcdc"></div>
<div style="position:absolute;left:0px;top:518px;width:39px;height:1px;background:#d0d0d0"></div>
<div style="position:absolute;left:40px;top:548px;width:1220px;height:1px;background:#dcdcdc"></div>
<div style="position:absolute;left:0px;top:548px;width:39px;height:1px;background:#d0d0d0"></div>
<div style="position:absolute;left:40px;top:578px;width:1220px;height:1px;background:#dcdcdc"></div>
<div style="position:absolute;left:0px;top:578px;width:39px;height:1px;background:#d0d0d0"></div>
<div style="position:absolute;left:40px;top:608px;width:1220px;height:1px;background:#dcdcdc"></div>
<div style="position:absolute;left:0px;top:608px;width:39px;height:1px;background:#d0d0d0"></div>
<div style="position:absolute;left:40px;top:638px;width:1220px;height:1px;background:#dcdcdc"></div>
<div style="position:absolute;left:0px;top:638px;width:39px;height:1px;background:#d0d0d0"></div>
<div style="position:absolute;left:40px;top:668px;width:1220px;height:1px;background:#dcdcdc"></div>
<div style="position:absolute;left:0px;top:668px;width:39px;height:1px;background:#d0d0d0"></div>
<div style="position:absolute;left:281px;top:219px;width:1px;height:452px;background:#dcdcdc"></div>
<div style="position:absolute;left:281px;top:192px;width:1px;height:26px;background:#c6c6c6"></div>
<div style="position:absolute;left:452px;top:219px;width:1px;height:452px;background:#dcdcdc"></div>
<div style="position:absolute;left:452px;top:192px;width:1px;height:26px;background:#c6c6c6"></div>
<div style="position:absolute;left:592px;top:219px;width:1px;height:452px;background:#dcdcdc"></div>
<div style="position:absolute;left:592px;top:192px;width:1px;height:26px;background:#c6c6c6"></div>
<div style="position:absolute;left:731px;top:219px;width:1px;height:452px;background:#dcdcdc"></div>
<div style="position:absolute;left:731px;top:192px;width:1px;height:26px;background:#c6c6c6"></div>
<div style="position:absolute;left:891px;top:219px;width:1px;height:452px;background:#dcdcdc"></div>
<div style="position:absolute;left:891px;top:192px;width:1px;height:26px;background:#c6c6c6"></div>
<div style="position:absolute;left:1033px;top:219px;width:1px;height:452px;background:#dcdcdc"></div>
<div style="position:absolute;left:1033px;top:192px;width:1px;height:26px;background:#c6c6c6"></div>
<div style="position:absolute;left:1215px;top:219px;width:1px;height:452px;background:#dcdcdc"></div>
<div style="position:absolute;left:1215px;top:192px;width:1px;height:26px;background:#c6c6c6"></div>
<div style="position:absolute;left:1260px;top:219px;width:1px;height:452px;background:#dcdcdc"></div>
<div class="t" style="left:153.85px;top:195.90px;font-size:20px;font-weight:400;color:#333333;transform:scaleX(1.0000);">A</div>
<div class="t" style="left:360.05px;top:195.90px;font-size:20px;font-weight:400;color:#333333;transform:scaleX(1.0000);">B</div>
<div class="t" style="left:515.15px;top:195.90px;font-size:20px;font-weight:400;color:#333333;transform:scaleX(1.0000);">C</div>
<div class="t" style="left:654.45px;top:195.90px;font-size:20px;font-weight:400;color:#333333;transform:scaleX(1.0000);">D</div>
<div class="t" style="left:804.45px;top:195.90px;font-size:20px;font-weight:400;color:#333333;transform:scaleX(1.0000);">E</div>
<div class="t" style="left:956.00px;top:195.90px;font-size:20px;font-weight:400;color:#333333;transform:scaleX(1.0000);">F</div>
<div class="t" style="left:1116.95px;top:195.90px;font-size:20px;font-weight:400;color:#1e7344;transform:scaleX(1.0000);">G</div>
<div class="t" style="left:14.24px;top:223.63px;font-size:20.3px;font-weight:400;color:#333333;transform:scaleX(0.9700);">1</div>
<div class="t" style="left:14.54px;top:253.63px;font-size:20.3px;font-weight:400;color:#333333;transform:scaleX(0.9700);">2</div>
<div class="t" style="left:14.54px;top:283.63px;font-size:20.3px;font-weight:400;color:#333333;transform:scaleX(0.9700);">3</div>
<div class="t" style="left:14.63px;top:313.63px;font-size:20.3px;font-weight:400;color:#333333;transform:scaleX(0.9700);">4</div>
<div class="t" style="left:14.54px;top:343.63px;font-size:20.3px;font-weight:400;color:#2d6246;transform:scaleX(0.9700);">5</div>
<div class="t" style="left:14.44px;top:373.63px;font-size:20.3px;font-weight:400;color:#333333;transform:scaleX(0.9700);">6</div>
<div class="t" style="left:14.54px;top:403.63px;font-size:20.3px;font-weight:400;color:#333333;transform:scaleX(0.9700);">7</div>
<div class="t" style="left:14.49px;top:433.63px;font-size:20.3px;font-weight:400;color:#333333;transform:scaleX(0.9700);">8</div>
<div class="t" style="left:14.54px;top:463.63px;font-size:20.3px;font-weight:400;color:#333333;transform:scaleX(0.9700);">9</div>
<div class="t" style="left:8.68px;top:493.63px;font-size:20.3px;font-weight:400;color:#333333;transform:scaleX(0.9700);">10</div>
<div class="t" style="left:9.51px;top:523.63px;font-size:20.3px;font-weight:400;color:#333333;transform:scaleX(0.9700);">11</div>
<div class="t" style="left:8.83px;top:553.63px;font-size:20.3px;font-weight:400;color:#333333;transform:scaleX(0.9700);">12</div>
<div class="t" style="left:8.73px;top:583.63px;font-size:20.3px;font-weight:400;color:#333333;transform:scaleX(0.9700);">13</div>
<div class="t" style="left:8.63px;top:613.63px;font-size:20.3px;font-weight:400;color:#333333;transform:scaleX(0.9700);">14</div>
<div class="t" style="left:8.73px;top:643.63px;font-size:20.3px;font-weight:400;color:#333333;transform:scaleX(0.9700);">15</div>
<svg style="position:absolute;left:16px;top:196px;" width="20" height="19" viewBox="0 0 20 19"><path d="M19 1 L19 19 L1 19 Z" fill="#b4b4b4"/></svg>
<div style="position:absolute;left:40px;top:278px;width:852px;height:60px;background:#d8e2ec"></div>
<div style="position:absolute;left:40px;top:338px;width:852px;height:1px;background:#b3c3d6"></div>
<div style="position:absolute;left:40px;top:339px;width:851px;height:240px;background:#fcfcfc"></div>
<div style="position:absolute;left:40px;top:578px;width:852px;height:1px;background:#b3c3d6"></div>
<div style="position:absolute;left:40px;top:579px;width:852px;height:30px;background:#d8e2ec"></div>
<div class="t" style="left:43.14px;top:283.63px;font-size:20.3px;font-weight:700;color:#000;transform:scaleX(0.9136);">Sum of Total Sales Value</div>
<div class="t" style="left:284.88px;top:283.63px;font-size:20.3px;font-weight:700;color:#000;transform:scaleX(0.8900);">Column Labels</div>
<div class="t" style="left:43.02px;top:313.63px;font-size:20.3px;font-weight:700;color:#000;transform:scaleX(0.8975);">Row Labels</div>
<div class="t" style="left:284.89px;top:313.63px;font-size:20.3px;font-weight:700;color:#000;transform:scaleX(0.9990);">2010</div>
<div class="t" style="left:455.69px;top:313.63px;font-size:20.3px;font-weight:700;color:#000;transform:scaleX(1.0062);">2011</div>
<div class="t" style="left:595.04px;top:313.63px;font-size:20.3px;font-weight:700;color:#000;transform:scaleX(1.0024);">2012</div>
<div class="t" style="left:735.04px;top:313.63px;font-size:20.3px;font-weight:700;color:#000;transform:scaleX(0.9326);">Grand Total</div>
<div style="position:absolute;left:436px;top:291px;width:16px;height:16px;background:linear-gradient(#fdfdfd,#eef0f2);border:1px solid #a6a6a6;box-sizing:border-box"></div>
<svg style="position:absolute;left:440px;top:297px;" width="8" height="5" viewBox="0 0 8 5"><path d="M0.5 0.5 L7.5 0.5 L4 4.5 Z" fill="#505050"/></svg>
<div style="position:absolute;left:265px;top:322px;width:16px;height:16px;background:linear-gradient(#fdfdfd,#eef0f2);border:1px solid #a6a6a6;box-sizing:border-box"></div>
<svg style="position:absolute;left:269px;top:328px;" width="8" height="5" viewBox="0 0 8 5"><path d="M0.5 0.5 L7.5 0.5 L4 4.5 Z" fill="#505050"/></svg>
<div class="t" style="left:43.01px;top:343.63px;font-size:20.3px;font-weight:400;color:#000;transform:scaleX(0.9198);">Beverages</div>
<div class="t" style="left:291.80px;top:343.63px;font-size:20.3px;font-weight:400;color:#000;transform:scaleX(0.9900);">£</div>
<div class="t" style="left:352.47px;top:343.63px;font-size:20.3px;font-weight:400;color:#000;transform:scaleX(0.9900);">48,109.01</div>
<div class="t" style="left:462.10px;top:343.63px;font-size:20.3px;font-weight:400;color:#000;transform:scaleX(0.9900);">£</div>
<div class="t" style="left:482.82px;top:343.63px;font-size:20.3px;font-weight:400;color:#000;transform:scaleX(0.9900);">113,684.14</div>
<div class="t" style="left:602.10px;top:343.63px;font-size:20.3px;font-weight:400;color:#000;transform:scaleX(0.9900);">£</div>
<div class="t" style="left:621.22px;top:343.63px;font-size:20.3px;font-weight:400;color:#000;transform:scaleX(0.9900);">126,901.53</div>
<div class="t" style="left:742.00px;top:343.63px;font-size:20.3px;font-weight:400;color:#000;transform:scaleX(0.9900);">£</div>
<div class="t" style="left:780.92px;top:343.63px;font-size:20.3px;font-weight:400;color:#000;transform:scaleX(0.9900);">288,694.68</div>
<div class="t" style="left:42.72px;top:373.63px;font-size:20.3px;font-weight:400;color:#000;transform:scaleX(0.9665);">Condiments</div>
<div class="t" style="left:291.80px;top:373.63px;font-size:20.3px;font-weight:400;color:#000;transform:scaleX(0.9900);">£</div>
<div class="t" style="left:352.57px;top:373.63px;font-size:20.3px;font-weight:400;color:#000;transform:scaleX(0.9900);">20,530.22</div>
<div class="t" style="left:462.10px;top:373.63px;font-size:20.3px;font-weight:400;color:#000;transform:scaleX(0.9900);">£</div>
<div class="t" style="left:492.77px;top:373.63px;font-size:20.3px;font-weight:400;color:#000;transform:scaleX(0.9900);">54,860.09</div>
<div class="t" style="left:602.10px;top:373.63px;font-size:20.3px;font-weight:400;color:#000;transform:scaleX(0.9900);">£</div>
<div class="t" style="left:632.37px;top:373.63px;font-size:20.3px;font-weight:400;color:#000;transform:scaleX(0.9900);">38,602.33</div>
<div class="t" style="left:742.00px;top:373.63px;font-size:20.3px;font-weight:400;color:#000;transform:scaleX(0.9900);">£</div>
<div class="t" style="left:782.22px;top:373.63px;font-size:20.3px;font-weight:400;color:#000;transform:scaleX(0.9900);">113,992.64</div>
<div class="t" style="left:42.72px;top:403.63px;font-size:20.3px;font-weight:400;color:#000;transform:scaleX(0.9682);">Confections</div>
<div class="t" style="left:291.80px;top:403.63px;font-size:20.3px;font-weight:400;color:#000;transform:scaleX(0.9900);">£</div>
<div class="t" style="left:352.17px;top:403.63px;font-size:20.3px;font-weight:400;color:#000;transform:scaleX(0.9900);">29,812.54</div>
<div class="t" style="left:462.10px;top:403.63px;font-size:20.3px;font-weight:400;color:#000;transform:scaleX(0.9900);">£</div>
<div class="t" style="left:492.77px;top:403.63px;font-size:20.3px;font-weight:400;color:#000;transform:scaleX(0.9900);">86,259.09</div>
<div class="t" style="left:602.10px;top:403.63px;font-size:20.3px;font-weight:400;color:#000;transform:scaleX(0.9900);">£</div>
<div class="t" style="left:632.27px;top:403.63px;font-size:20.3px;font-weight:400;color:#000;transform:scaleX(0.9900);">63,792.10</div>
<div class="t" style="left:742.00px;top:403.63px;font-size:20.3px;font-weight:400;color:#000;transform:scaleX(0.9900);">£</div>
<div class="t" style="left:780.92px;top:403.63px;font-size:20.3px;font-weight:400;color:#000;transform:scaleX(0.9900);">179,863.73</div>
<div class="t" style="left:42.13px;top:433.63px;font-size:20.3px;font-weight:400;color:#000;transform:scaleX(0.9653);">Dairy Products</div>
<div class="t" style="left:291.80px;top:433.63px;font-size:20.3px;font-weight:400;color:#000;transform:scaleX(0.9900);">£</div>
<div class="t" style="left:352.47px;top:433.63px;font-size:20.3px;font-weight:400;color:#000;transform:scaleX(0.9900);">37,541.41</div>
<div class="t" style="left:462.10px;top:433.63px;font-size:20.3px;font-weight:400;color:#000;transform:scaleX(0.9900);">£</div>
<div class="t" style="left:481.52px;top:433.63px;font-size:20.3px;font-weight:400;color:#000;transform:scaleX(0.9900);">125,622.18</div>
<div class="t" style="left:602.10px;top:433.63px;font-size:20.3px;font-weight:400;color:#000;transform:scaleX(0.9900);">£</div>
<div class="t" style="left:632.37px;top:433.63px;font-size:20.3px;font-weight:400;color:#000;transform:scaleX(0.9900);">87,984.06</div>
<div class="t" style="left:742.00px;top:433.63px;font-size:20.3px;font-weight:400;color:#000;transform:scaleX(0.9900);">£</div>
<div class="t" style="left:780.92px;top:433.63px;font-size:20.3px;font-weight:400;color:#000;transform:scaleX(0.9900);">251,147.65</div>
<div class="t" style="left:42.74px;top:463.63px;font-size:20.3px;font-weight:400;color:#000;transform:scaleX(0.9448);">Grains/Cereals</div>
<div class="t" style="left:291.80px;top:463.63px;font-size:20.3px;font-weight:400;color:#000;transform:scaleX(0.9900);">£</div>
<div class="t" style="left:363.73px;top:463.63px;font-size:20.3px;font-weight:400;color:#000;transform:scaleX(0.9900);">9,159.91</div>
<div class="t" style="left:462.10px;top:463.63px;font-size:20.3px;font-weight:400;color:#000;transform:scaleX(0.9900);">£</div>
<div class="t" style="left:492.67px;top:463.63px;font-size:20.3px;font-weight:400;color:#000;transform:scaleX(0.9900);">57,879.86</div>
<div class="t" style="left:602.10px;top:463.63px;font-size:20.3px;font-weight:400;color:#000;transform:scaleX(0.9900);">£</div>
<div class="t" style="left:632.27px;top:463.63px;font-size:20.3px;font-weight:400;color:#000;transform:scaleX(0.9900);">34,607.20</div>
<div class="t" style="left:742.00px;top:463.63px;font-size:20.3px;font-weight:400;color:#000;transform:scaleX(0.9900);">£</div>
<div class="t" style="left:781.12px;top:463.63px;font-size:20.3px;font-weight:400;color:#000;transform:scaleX(0.9900);">101,646.97</div>
<div class="t" style="left:42.01px;top:493.63px;font-size:20.3px;font-weight:400;color:#000;transform:scaleX(1.0422);">Meat/Poultry</div>
<div class="t" style="left:291.80px;top:493.63px;font-size:20.3px;font-weight:400;color:#000;transform:scaleX(0.9900);">£</div>
<div class="t" style="left:352.37px;top:493.63px;font-size:20.3px;font-weight:400;color:#000;transform:scaleX(0.9900);">24,838.73</div>
<div class="t" style="left:462.10px;top:493.63px;font-size:20.3px;font-weight:400;color:#000;transform:scaleX(0.9900);">£</div>
<div class="t" style="left:492.67px;top:493.63px;font-size:20.3px;font-weight:400;color:#000;transform:scaleX(0.9900);">83,783.08</div>
<div class="t" style="left:602.10px;top:493.63px;font-size:20.3px;font-weight:400;color:#000;transform:scaleX(0.9900);">£</div>
<div class="t" style="left:632.57px;top:493.63px;font-size:20.3px;font-weight:400;color:#000;transform:scaleX(0.9900);">66,000.77</div>
<div class="t" style="left:742.00px;top:493.63px;font-size:20.3px;font-weight:400;color:#000;transform:scaleX(0.9900);">£</div>
<div class="t" style="left:780.92px;top:493.63px;font-size:20.3px;font-weight:400;color:#000;transform:scaleX(0.9900);">174,622.58</div>
<div class="t" style="left:42.13px;top:523.63px;font-size:20.3px;font-weight:400;color:#000;transform:scaleX(0.9647);">Produce</div>
<div class="t" style="left:291.80px;top:523.63px;font-size:20.3px;font-weight:400;color:#000;transform:scaleX(0.9900);">£</div>
<div class="t" style="left:352.57px;top:523.63px;font-size:20.3px;font-weight:400;color:#000;transform:scaleX(0.9900);">13,379.47</div>
<div class="t" style="left:462.10px;top:523.63px;font-size:20.3px;font-weight:400;color:#000;transform:scaleX(0.9900);">£</div>
<div class="t" style="left:492.77px;top:523.63px;font-size:20.3px;font-weight:400;color:#000;transform:scaleX(0.9900);">49,050.31</div>
<div class="t" style="left:602.10px;top:523.63px;font-size:20.3px;font-weight:400;color:#000;transform:scaleX(0.9900);">£</div>
<div class="t" style="left:632.37px;top:523.63px;font-size:20.3px;font-weight:400;color:#000;transform:scaleX(0.9900);">43,315.93</div>
<div class="t" style="left:742.00px;top:523.63px;font-size:20.3px;font-weight:400;color:#000;transform:scaleX(0.9900);">£</div>
<div class="t" style="left:781.02px;top:523.63px;font-size:20.3px;font-weight:400;color:#000;transform:scaleX(0.9900);">105,745.71</div>
<div class="t" style="left:42.83px;top:553.63px;font-size:20.3px;font-weight:400;color:#000;transform:scaleX(0.9484);">Seafood</div>
<div class="t" style="left:291.80px;top:553.63px;font-size:20.3px;font-weight:400;color:#000;transform:scaleX(0.9900);">£</div>
<div class="t" style="left:352.17px;top:553.63px;font-size:20.3px;font-weight:400;color:#000;transform:scaleX(0.9900);">20,318.54</div>
<div class="t" style="left:462.10px;top:553.63px;font-size:20.3px;font-weight:400;color:#000;transform:scaleX(0.9900);">£</div>
<div class="t" style="left:492.77px;top:553.63px;font-size:20.3px;font-weight:400;color:#000;transform:scaleX(0.9900);">66,852.31</div>
<div class="t" style="left:602.10px;top:553.63px;font-size:20.3px;font-weight:400;color:#000;transform:scaleX(0.9900);">£</div>
<div class="t" style="left:632.37px;top:553.63px;font-size:20.3px;font-weight:400;color:#000;transform:scaleX(0.9900);">50,818.48</div>
<div class="t" style="left:742.00px;top:553.63px;font-size:20.3px;font-weight:400;color:#000;transform:scaleX(0.9900);">£</div>
<div class="t" style="left:780.92px;top:553.63px;font-size:20.3px;font-weight:400;color:#000;transform:scaleX(0.9900);">137,989.33</div>
<div class="t" style="left:42.94px;top:583.63px;font-size:20.3px;font-weight:700;color:#000;transform:scaleX(0.9344);">Grand Total</div>
<div class="t" style="left:292.20px;top:583.63px;font-size:20.3px;font-weight:700;color:#000;transform:scaleX(0.9900);">£</div>
<div class="t" style="left:341.12px;top:583.63px;font-size:20.3px;font-weight:700;color:#000;transform:scaleX(0.9900);">203,689.83</div>
<div class="t" style="left:462.50px;top:583.63px;font-size:20.3px;font-weight:700;color:#000;transform:scaleX(0.9900);">£</div>
<div class="t" style="left:481.42px;top:583.63px;font-size:20.3px;font-weight:700;color:#000;transform:scaleX(0.9900);">637,991.06</div>
<div class="t" style="left:602.50px;top:583.63px;font-size:20.3px;font-weight:700;color:#000;transform:scaleX(0.9900);">£</div>
<div class="t" style="left:621.22px;top:583.63px;font-size:20.3px;font-weight:700;color:#000;transform:scaleX(0.9900);">512,022.40</div>
<div class="t" style="left:742.40px;top:583.63px;font-size:20.3px;font-weight:700;color:#000;transform:scaleX(0.9900);">£</div>
<div class="t" style="left:764.04px;top:583.63px;font-size:20.3px;font-weight:700;color:#000;transform:scaleX(0.9900);">1,353,703.29</div>
<div style="position:absolute;left:1033px;top:308px;width:183px;height:31px;background:#f6d1b1;border:1px solid #bba08c;border-bottom:none;box-sizing:border-box"></div>
<div class="t" style="left:1037.42px;top:313.03px;font-size:20.3px;font-weight:700;color:#000;transform:scaleX(0.8918);">Produce</div>
<div style="position:absolute;left:1033px;top:338px;width:183px;height:32px;border:2px solid #1d6b42;box-sizing:border-box"></div>
<div style="position:absolute;left:1213px;top:366px;width:4px;height:4px;background:#1e7344"></div>
<div style="position:absolute;left:1038px;top:352px;width:9px;height:2px;background:#111"></div>
<div style="position:absolute;left:1038px;top:357px;width:9px;height:2px;background:#111"></div>
<svg style="position:absolute;left:1084px;top:321px;" width="15" height="17" viewBox="0 0 15 17"><path d="M5 1.5H10V6H13.5V11H10V15.5H5V11H1.5V6H5Z" fill="#fff" stroke="#111" stroke-width="1.2"/></svg>
<div style="position:absolute;left:1260px;top:192px;width:20px;height:479px;background:#e2e2e2"></div>
<div style="position:absolute;left:1260px;top:218px;width:1px;height:453px;background:#c8c8c8"></div>
<div style="position:absolute;left:1264px;top:193px;width:12px;height:478px;background:#dcdcdc;border-left:1px solid #ababab;box-sizing:border-box"></div>
<div style="position:absolute;left:1264px;top:193px;width:12px;height:14px;background:#fff;border:1px solid #ababab;border-right:none;box-sizing:border-box"></div>
<div style="position:absolute;left:1264px;top:207px;width:12px;height:338px;background:#fdfdfd;border:1px solid #ababab;border-right:none;box-sizing:border-box"></div>
<div style="position:absolute;left:1264px;top:659px;width:12px;height:13px;background:#fff;border:1px solid #ababab;border-right:none;box-sizing:border-box"></div>
<svg style="position:absolute;left:1267px;top:198px;" width="7" height="4" viewBox="0 0 7 4"><path d="M0 4L7 4L3.5 0.5Z" fill="#666"/></svg>
<svg style="position:absolute;left:1267px;top:664px;" width="7" height="4" viewBox="0 0 7 4"><path d="M0 0L7 0L3.5 3.5Z" fill="#666"/></svg>
<div style="position:absolute;left:1275px;top:0px;width:5px;height:61px;background:repeating-linear-gradient(180deg,#4b3f6b 0px,#4b3f6b 1.5px,#8b6f5a 1.5px,#8b6f5a 3px,#6a6070 3px,#6a6070 4px)"></div>
<div style="position:absolute;left:1276px;top:191px;width:4px;height:20px;background:#cfcfcf"></div>
<div style="position:absolute;left:1276px;top:211px;width:4px;height:7px;background:#8a8090"></div>
<div style="position:absolute;left:1276px;top:217px;width:4px;height:2px;background:#4a3a2a"></div>
<div style="position:absolute;left:1276px;top:219px;width:4px;height:452px;background:#fdfdfd"></div>
<div style="position:absolute;left:1275px;top:308px;width:5px;height:30px;background:linear-gradient(180deg,#c8b8c8,#8a7a8a 40%,#404050 60%,#b0c0b0)"></div>
<div style="position:absolute;left:1276px;top:351px;width:4px;height:8px;background:#777"></div>
<div style="position:absolute;left:1275px;top:590px;width:5px;height:12px;background:#555"></div>
<div style="position:absolute;left:0px;top:671px;width:1280px;height:27px;background:#e2e2e2"></div>
<div style="position:absolute;left:0px;top:672px;width:1260px;height:1px;background:#ababab"></div>
<div style="position:absolute;left:94px;top:671px;width:62px;height:24px;background:#fff"></div>
<div style="position:absolute;left:94px;top:693px;width:62px;height:2px;background:#1e7344"></div>
<div class="t" style="left:105.26px;top:678.14px;font-size:12px;font-weight:700;color:#1e7344;transform:scaleX(0.9535);">Sheet1</div>
<div class="t" style="left:166.88px;top:678.14px;font-size:12px;font-weight:400;color:#444;transform:scaleX(0.9648);">Sheet2</div>
<div class="t" style="left:228.39px;top:678.14px;font-size:12px;font-weight:400;color:#444;transform:scaleX(1.0507);">List of Orders</div>
<div style="position:absolute;left:94px;top:671px;width:1px;height:24px;background:#c6c6c6"></div>
<div style="position:absolute;left:155px;top:671px;width:1px;height:24px;background:#c6c6c6"></div>
<div style="position:absolute;left:216px;top:678px;width:1px;height:16px;background:#b0b0b0"></div>
<div style="position:absolute;left:316px;top:678px;width:1px;height:16px;background:#b0b0b0"></div>
<svg style="position:absolute;left:347px;top:676px;" width="17" height="17" viewBox="0 0 17 17"><circle cx="8.5" cy="8.5" r="7" fill="none" stroke="#666" stroke-width="1.2"/><path d="M8.5 4.5V12.5M4.5 8.5H12.5" stroke="#666" stroke-width="1.3"/></svg>
<svg style="position:absolute;left:24px;top:681px;" width="6" height="9" viewBox="0 0 6 9"><path d="M5 0.5 L1 4.5 L5 8.5Z" fill="#bbb"/></svg>
<svg style="position:absolute;left:51px;top:681px;" width="6" height="9" viewBox="0 0 6 9"><path d="M1 0.5 L5 4.5 L1 8.5Z" fill="#bbb"/></svg>
<div style="position:absolute;left:768px;top:681px;width:2px;height:2px;background:#a0a0a0"></div>
<div style="position:absolute;left:768px;top:685px;width:2px;height:2px;background:#a0a0a0"></div>
<div style="position:absolute;left:768px;top:689px;width:2px;height:2px;background:#a0a0a0"></div>
<div style="position:absolute;left:784px;top:679px;width:477px;height:14px;background:#dcdcdc;border:1px solid #ababab;box-sizing:border-box"></div>
<div style="position:absolute;left:784px;top:679px;width:14px;height:14px;background:#fff;border:1px solid #ababab;box-sizing:border-box"></div>
<div style="position:absolute;left:797px;top:679px;width:394px;height:14px;background:#fff;border:1px solid #ababab;box-sizing:border-box"></div>
<div style="position:absolute;left:1247px;top:679px;width:14px;height:14px;background:#fff;border:1px solid #ababab;box-sizing:border-box"></div>
<svg style="position:absolute;left:788px;top:682px;" width="5" height="8" viewBox="0 0 5 8"><path d="M4.5 0 L0.5 4 L4.5 8Z" fill="#444"/></svg>
<svg style="position:absolute;left:1252px;top:682px;" width="5" height="8" viewBox="0 0 5 8"><path d="M0.5 0 L4.5 4 L0.5 8Z" fill="#444"/></svg>
<div style="position:absolute;left:0px;top:698px;width:1280px;height:19px;background:#ededed"></div>
<div style="position:absolute;left:0px;top:697px;width:1280px;height:1px;background:#d8d8d8"></div>
<div style="position:absolute;left:0px;top:717px;width:1280px;height:3px;background:#111"></div>
<div class="t" style="left:6.88px;top:701.59px;font-size:11.5px;font-weight:400;color:#5a5a5a;transform:scaleX(0.9493);">Enter</div>
<svg style="position:absolute;left:55px;top:702px;" width="13" height="13" viewBox="0 0 13 13"><circle cx="3" cy="3" r="2.5" fill="#888"/><rect x="6" y="0.5" width="6.5" height="4" fill="#888"/><path d="M0.5 6.5H12.5V12.5H0.5ZM4.5 6.5V12.5M8.5 6.5V12.5M0.5 9.5H12.5" fill="none" stroke="#888"/></svg>
<svg style="position:absolute;left:1018px;top:702px;" width="13" height="12" viewBox="0 0 13 12"><path d="M0.5 0.5H12.5V11.5H0.5ZM4.5 0.5V11.5M8.5 0.5V11.5M0.5 4.2H12.5M0.5 7.8H12.5" fill="none" stroke="#777"/></svg>
<svg style="position:absolute;left:1054px;top:702px;" width="13" height="12" viewBox="0 0 13 12"><path d="M0.5 0.5H12.5V11.5H0.5Z" fill="none" stroke="#777"/><path d="M3.5 2.5H9.5V9.5H3.5ZM5 4.5H8M5 6H8M5 7.5H8" fill="none" stroke="#888"/></svg>
<svg style="position:absolute;left:1090px;top:702px;" width="13" height="12" viewBox="0 0 13 12"><path d="M0.5 0.5H12.5V11.5H0.5ZM5.5 0.5V5.5H0.5M8.5 0.5V5.5" fill="none" stroke="#777"/></svg>
<div style="position:absolute;left:1119px;top:708px;width:5px;height:1px;background:#888"></div>
<div style="position:absolute;left:1128px;top:708px;width:94px;height:1px;background:#aaa"></div>
<div style="position:absolute;left:1175px;top:705px;width:1px;height:6px;background:#888"></div>
<svg style="position:absolute;left:1226px;top:703px;" width="10" height="10" viewBox="0 0 10 10"><path d="M5 0.5V9.5M0.5 5H9.5" stroke="#888" stroke-width="1.3"/></svg>
<div class="t" style="left:1247.23px;top:702.04px;font-size:11px;font-weight:400;color:#b0b0b0;transform:scaleX(0.9276);">160%</div>
</body></html>
